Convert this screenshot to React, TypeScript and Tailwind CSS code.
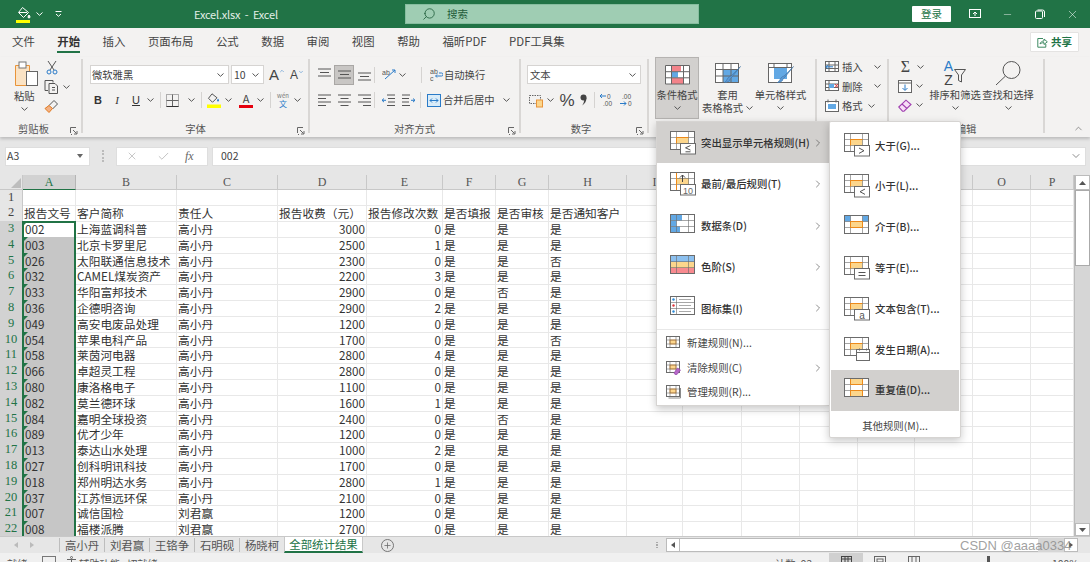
import React from "react";
import { X, Check, Minus, Search, ChevronDown, ChevronRight, ChevronUp, Plus } from "lucide-react";

const Chev = ({ c = "" }: { c?: string }) => (
  <svg width="7" height="4" viewBox="0 0 7 4" className={`shrink-0 ${c}`} fill="none" stroke="#555" strokeWidth="1"><path d="M.5.5 3.5 3.3 6.5.5" /></svg>
);

type Kind = "gt" | "lt" | "le" | "top" | "bar" | "scale" | "set" | "between" | "eq" | "text" | "date" | "dup";

const GridIcon = ({ k }: { k: Kind }) => {
  const g = "#6b6b6b";
  return (
    <svg width="27" height="24" viewBox="0 0 27 24" className="shrink-0">
      <rect x=".5" y=".5" width="24" height="18" fill="#fff" />
      {(k === "gt" || k === "lt" || k === "le" || k === "eq" || k === "text" || k === "date") && (
        <><rect x="6.5" y="6.5" width="12" height="6" fill="#fcd68c" /></>
      )}
      {k === "top" && <><rect x="6" y="6" width="13" height="6" fill="#fcd68c" /></>}
      {k === "bar" && <><rect x="1" y="1" width="11" height="5.5" fill="#62a8e4" /><rect x="1" y="6.5" width="5.5" height="6" fill="#62a8e4" /><rect x="1" y="12.5" width="9" height="6" fill="#62a8e4" /></>}
      {k === "scale" && <><rect x="1" y="1" width="24" height="6" fill="#8cc0ef" /><rect x="1" y="7" width="24" height="6" fill="#fcd68c" /><rect x="1" y="13" width="24" height="6" fill="#f88a8f" /></>}
      {k === "between" && <><rect x="1" y="1" width="5.5" height="5.5" fill="#62a8e4" /><rect x="18.5" y="1" width="6" height="5.5" fill="#62a8e4" /><rect x="6.5" y="6.5" width="12" height="6" fill="#fcd68c" /></>}
      {k === "dup" && <><rect x="6.5" y=".5" width="12" height="6" fill="#fcd68c" /><rect x="6.5" y="12.5" width="12" height="6" fill="#fcd68c" /></>}
      <path d={k === "set" ? "M.5 6.5h24M.5 12.5h24M6.5 .5v18" : "M.5 6.5h24M.5 12.5h24M6.5 .5v18M18.5 .5v18"} stroke={g} fill="none" opacity=".6" />
      {(k === "gt" || k === "lt" || k === "le" || k === "eq" || k === "text" || k === "date") && <path d="M6.5 12.5v-6h12" stroke="#ed8a1a" fill="none" />}
      {k === "top" && <path d="M6.5 18.5V.5M6.5 .5h12" stroke="#ed8a1a" fill="none" />}
      {k === "between" && <path d="M6.5 12.5v-6h12v6z" stroke="#ed8a1a" fill="none" />}
      {k === "dup" && <path d="M6.5 .5v6h12v-6M6.5 18.5v-6h12v6" stroke="#ed8a1a" fill="none" />}
      {k === "set" && <><circle cx="3.5" cy="3.5" r="1.2" fill="#2a8ad8" /><circle cx="3.5" cy="9.5" r="1.2" fill="#e0383c" /><circle cx="3.5" cy="15.5" r="1.2" fill="#2a8ad8" /><path d="M9 3.5h12M9 9.5h12M9 15.5h12" stroke="#aaa" /></>}
      <rect x=".5" y=".5" width="24" height="18" fill="none" stroke={g} />
      {k === "top" && <path d="M12.5 10V3M10 5.5l2.5-2.5 2.5 2.5" stroke="#444" fill="none" />}
      {(k === "gt" || k === "lt" || k === "le" || k === "eq" || k === "text" || k === "top") && <rect x="10.5" y="12.5" width="15" height="10.5" fill="#fff" stroke={g} />}
      {k === "gt" && <path d="M15 15l5 2.700-5 2.700" stroke="#555" fill="none" />}
      {k === "lt" && <path d="M21 15l-5 2.700 5 2.700" stroke="#555" fill="none" />}
      {k === "le" && <path d="M20.500 14.500l-5 2.300 5 2.300M15.500 20.800h5" stroke="#555" fill="none" />}
      {k === "eq" && <path d="M14.500 16.500h7M14.500 19.500h7" stroke="#555" fill="none" />}
      {k === "text" && <text x="18" y="21.5" textAnchor="middle" fontSize="10" fill="#555" fontFamily="Liberation Sans">a</text>}
      {k === "top" && <text x="18" y="21.6" textAnchor="middle" fontSize="9" fill="#666" fontFamily="Liberation Sans">10</text>}
      {k === "date" && <><rect x="12.5" y="12.5" width="13" height="11" fill="#fff" stroke={g} /><path d="M12.5 15.5h13" stroke={g} /><path d="M15.5 11.5v2M22.5 11.5v2" stroke={g} /></>}
    </svg>
  );
};

const SmallGrid = ({ k }: { k: "new" | "clear" | "manage" }) => (
  <svg width="15" height="14" viewBox="0 0 15 14" className="shrink-0">
    <rect x=".5" y=".5" width="13" height="11" fill="#fff" stroke="#6b6b6b" />
    <rect x="4" y="4" width="6" height="4" fill="#fcd68c" stroke="#ed8a1a" strokeWidth=".8" />
    <path d="M.5 4h13M.5 8h13M4 .5v11M10 .5v11" stroke="#6b6b6b" strokeWidth=".6" fill="none" />
    {k === "clear" && <path d="M8 12l3.500-5 3 2-3.500 4.500h-2z" fill="#b668c8" stroke="#8f3fa6" strokeWidth=".6" />}
    {k === "manage" && <path d="M2.500 13h12V3" fill="none" stroke="#8a8a8a" />}
  </svg>
);

const Align = ({ kind }: { kind: "l" | "c" | "r" }) => {
  const rows = kind === "l" ? ["M1 1h13", "M1 4.5h8", "M1 8h13", "M1 11.5h8"] : kind === "c" ? ["M1 1h13", "M3.5 4.5h8", "M1 8h13", "M3.5 11.5h8"] : ["M1 1h13", "M6 4.5h8", "M1 8h13", "M6 11.5h8"];
  return <svg width="15" height="13" viewBox="0 0 15 13" stroke="#555" fill="none"><path d={rows.join("")} /></svg>;
};

const VAlign = ({ y }: { y: number }) => (
  <svg width="15" height="13" viewBox="0 0 15 13" stroke="#555" fill="none"><path d={`M1 ${y}h13M3 ${y + 3.5}h9M1 ${y + 7}h13`} /></svg>
);

const Launcher = () => (
  <svg width="8" height="8" viewBox="0 0 8 8" fill="none" stroke="#666"><path d="M.5 6V.5H6" /><path d="M3 3l3.500 3.500M7 4v3H4" /><path d="M1 7.500h1" /></svg>
);

const Sep = ({ h = "h-[16px]" }: { h?: string }) => <div className={`w-px bg-[#d5d3d1] shrink-0 ${h}`} />;

const Group = ({ w, label, children, launcher = true, labelClass = "" }: { w: string; label: string; children: React.ReactNode; launcher?: boolean; labelClass?: string }) => (
  <div className={`${w} shrink-0 h-full flex flex-col`}>
    <div className="h-[64px] flex">{children}</div>
    <div className="flex-1 flex items-center relative">
      <div className={`w-full text-center text-[#555] text-[10.3px] leading-none ${labelClass}`}>{label}</div>
      {launcher && <div className="absolute right-[3px] top-[6px]"><Launcher /></div>}
    </div>
  </div>
);

const GSep = () => <div className="w-[2px] h-[74px] mt-[2px] bg-[#d9d7d5] shrink-0" />;

const StackBtn = ({ w, icon, lines, active = false }: { w: string; icon: React.ReactNode; lines: string[]; active?: boolean }) => (
  <div className={`${w} shrink-0 flex flex-col items-center text-[10.3px] leading-[13px] text-[#444] h-[62px] ${active ? "bg-[#d2d0ce] border border-[#b5b3b1]" : ""}`}>
    <div className={`${active ? "h-[29px]" : "h-[30px]"} flex items-end`}>{icon}</div>
    <div className="mt-[1px] whitespace-nowrap">{lines[0]}</div>
    {lines[1] ? (
      <div className="whitespace-nowrap flex items-center gap-[3px]">{lines[1]}<Chev /></div>
    ) : (
      <div className="h-[13px] flex items-center"><Chev /></div>
    )}
  </div>
);

const Tabs = ["文件", "开始", "插入", "页面布局", "公式", "数据", "审阅", "视图", "帮助", "福昕PDF", "PDF工具集"];

const FF = "font-['Noto_Sans_CJK_SC','Noto_Sans',sans-serif]";

const cols = ["A", "B", "C", "D", "E", "F", "G", "H", "I", "", "", "", "", "", "O", "P"];
const rows: [string, string, string, number, number, string, string, string][] = [
  ["002", "上海蓝调科普", "高小丹", 3000, 0, "是", "是", "是"],
  ["003", "北京卡罗里尼", "高小丹", 2500, 1, "是", "是", "是"],
  ["026", "太阳联通信息技术", "高小丹", 2300, 0, "是", "是", "否"],
  ["032", "CAMEL煤炭资产", "高小丹", 2200, 3, "是", "是", "是"],
  ["033", "华阳富邦技术", "高小丹", 2900, 0, "是", "否", "是"],
  ["036", "企德明咨询", "高小丹", 2900, 2, "是", "是", "是"],
  ["049", "高安电废品处理", "高小丹", 1200, 0, "是", "是", "是"],
  ["054", "苹果电科产品", "高小丹", 1700, 0, "是", "是", "否"],
  ["058", "莱茵河电器", "高小丹", 2800, 4, "是", "是", "是"],
  ["066", "卓超灵工程", "高小丹", 2800, 0, "是", "是", "是"],
  ["080", "康洛格电子", "高小丹", 1100, 0, "是", "是", "是"],
  ["082", "莫兰德环球", "高小丹", 1600, 1, "是", "是", "是"],
  ["084", "嘉明全球投资", "高小丹", 2400, 0, "是", "否", "是"],
  ["089", "优才少年", "高小丹", 1200, 0, "是", "是", "是"],
  ["013", "泰达山水处理", "高小丹", 1000, 2, "是", "是", "是"],
  ["027", "创科明讯科技", "高小丹", 1700, 0, "是", "是", "是"],
  ["018", "郑州明达水务", "高小丹", 2800, 1, "是", "是", "是"],
  ["037", "江苏恒远环保", "高小丹", 2100, 0, "是", "是", "是"],
  ["007", "诚信国检", "刘君赢", 1200, 0, "是", "是", "是"],
  ["008", "福楼派腾", "刘君赢", 2700, 0, "是", "是", "是"],
];

const GRID = "grid grid-cols-[23px_53px_101px_101px_89px_76px_53px_53px_78px_56px_59px_58px_58px_57px_58px_58px_43px]";
const CELL = "border-r border-b border-[#e8e8e8] px-[1px] whitespace-nowrap overflow-visible min-w-0";
const Empties = ({ n }: { n: number }) => <>{Array.from({ length: n }).map((_, i) => <div key={i} className={CELL} />)}</>;
const RowHead = ({ n, sel }: { n: number; sel?: boolean }) => (
  <div className={`font-['Liberation_Serif',serif] text-[12.5px] text-center border-r border-b ${sel ? "bg-[#d2d2d2] text-[#217346] border-[#b5b5b5] border-r-[#217346]" : "bg-[#e6e6e6] text-[#444] border-[#c8c8c8]"}`}>{n}</div>
);

const menu1: [Kind, string][] = [["le", "突出显示单元格规则(H)"], ["top", "最前/最后规则(T)"], ["bar", "数据条(D)"], ["scale", "色阶(S)"], ["set", "图标集(I)"]];
const menu2: [Kind, string][] = [["gt", "大于(G)..."], ["lt", "小于(L)..."], ["between", "介于(B)..."], ["eq", "等于(E)..."], ["text", "文本包含(T)..."], ["date", "发生日期(A)..."], ["dup", "重复值(D)..."]];

const Brush = () => (
  <path d="M25.500 3.500L17 14c-1.500 1-2 2-2.500 3.500-1.500 1.500-3 2-5 2 1.500-1 2.500-3 3.500-4.500 1-1.500 2-1.500 3.200-2z" fill="#5d9ad6" stroke="#3c6f9f" strokeWidth=".6" />
);

export default function App() {
  return (
    <div className={`relative w-[1090px] h-[562px] overflow-hidden flex flex-col bg-[#e6e6e6] ${FF}`}>
      {/* Title bar */}
      <div className="h-[28px] shrink-0 bg-[#217346] flex items-center text-white">
        <div className="pl-[16px] w-[194px] flex items-center">
          <svg width="15" height="17" viewBox="0 0 15 17" fill="none" stroke="#fff"><path d="M6.500 1.500l6 5-5 5-5-5zM3 6.500h8" /><path d="M13 9c.8 1 1 1.600 1 2a1 1 0 0 1-2 0c0-.4.3-1 1-2z" fill="#fff" /><rect x="0" y="14" width="14" height="3" fill="#ffff00" stroke="none" /></svg>
          <svg width="7" height="4" viewBox="0 0 7 4" className="ml-[5px]" fill="none" stroke="#fff"><path d="M.5.5 3.500 3.300 6.500.5" /></svg>
          <svg width="7" height="6" viewBox="0 0 7 6" className="ml-[12px]" fill="none" stroke="#fff"><path d="M.5.5h6M1 3l2.500 2.300L6 3" /></svg>
        </div>
        <div className="w-[211px] text-[11px] tracking-[-0.2px] text-[#e4efe9] whitespace-pre">Excel.xlsx  -  Excel</div>
        <div className="w-[294px] h-[20px] bg-[#9fcdb3] border border-[#86bd9f] flex items-center pl-[16px] text-[#1f5c3a] text-[10.5px]">
          <Search size={14} strokeWidth={1.4} className="-scale-x-100" />
          <span className="ml-[11px]">搜索</span>
        </div>
        <div className="ml-[213px] w-[39px] h-[16px] bg-white rounded-[1px] text-[#217346] text-[10.5px] text-center leading-[16px]">登录</div>
        <svg width="12" height="10" viewBox="0 0 12 10" className="ml-[18px]" fill="none" stroke="#fff"><rect x=".5" y=".5" width="11" height="8" /><path d="M6 7V3M4 5l2-2 2 2" /></svg>
        <Minus size={11} strokeWidth={1} className="ml-[21px]" />
        <svg width="10" height="10" viewBox="0 0 10 10" className="ml-[22px]" fill="none" stroke="#fff"><rect x=".5" y="2" width="7" height="7.500" rx="1" /><path d="M2.500 1h5a2 2 0 0 1 2 2v5" /></svg>
        <X size={13} strokeWidth={1} className="ml-[21px]" />
      </div>

      {/* Tabs */}
      <div className="h-[29px] shrink-0 bg-[#f3f2f1] flex items-center pl-[12px] gap-[22.5px] relative text-[11.4px] text-[#444]">
        {Tabs.map((t) => (
          <div key={t} className={`relative h-[29px] leading-[27px] whitespace-nowrap ${t === "开始" ? "font-bold text-[#333]" : ""}`}>
            {t}
            {t === "开始" && <div className="absolute left-0 right-0 top-[23px] h-[2px] bg-[#217346]" />}
          </div>
        ))}
        <div className="absolute left-[1030px] top-[4px] w-[49px] h-[20px] bg-white border border-[#e4e3e2] rounded-[1px] flex items-center justify-center gap-[3px] text-[#217346] font-bold text-[10.5px]">
          <svg width="11" height="11" viewBox="0 0 11 11" fill="none" stroke="#3f8a63"><path d="M6 1.500H.8v8.700h8V7" /><path d="M3 7c.5-2 2-3 4-3V2l3.300 2.800L7 7.500V5.700C5.500 5.700 4 6 3 7z" /></svg>
          共享
        </div>
      </div>

      {/* Ribbon */}
      <div className="h-[80px] shrink-0 bg-[#f3f2f1] flex text-[#444] shadow-[0_2px_3px_rgba(0,0,0,0.18)] z-[1]">
        <Group w="w-[81px]" label="剪贴板" labelClass="pr-[14px]">
          <div className="w-[44px] pl-[14px] flex flex-col items-start text-[10.3px] leading-[13px]">
            <svg width="25" height="26" viewBox="0 0 25 26" className="mt-[4px]" fill="none"><path d="M1.500 4.500h14v20h-14z" fill="#fbe3c4" stroke="#e8943a" /><rect x="5" y="1" width="7" height="6" fill="#fff" stroke="#777" /><rect x="12.500" y="10.500" width="11" height="14" fill="#fff" stroke="#666" /></svg>
            <div className="mt-[2px]">粘贴</div>
            <Chev c="ml-[7px] mt-[5px]" />
          </div>
          <div className="flex flex-col pt-[3px] gap-[5px]">
            <svg width="12" height="15" viewBox="0 0 12 15" className="ml-[2px]" fill="none" stroke="#555"><path d="M2 1l6 9M10 1L4 10" /><circle cx="3" cy="12" r="2" stroke="#2a7bc8" /><circle cx="9" cy="12" r="2" stroke="#2a7bc8" /></svg>
            <div className="flex items-center gap-[4px]">
              <svg width="15" height="14" viewBox="0 0 15 14" fill="none" stroke="#555"><path d="M9 2.500V.5H1v10h3" /><path d="M5 3.500h6l2.500 2.500v7.500H5zM8 7.500h3M8 10h3" /></svg>
              <Chev />
            </div>
            <svg width="15" height="14" viewBox="0 0 15 14" fill="none" stroke="#555"><path d="M5 6.500l5-5 3.500 3.500-5 5" /><path d="M5 6.500L1 9.500 5 13.500l3.500-4z" fill="#f4b183" stroke="#e07a20" /></svg>
          </div>
        </Group>
        <GSep />
        <Group w="w-[225px]" label="字体">
          <div className="pl-[7px] flex flex-col">
            <div className="flex items-center mt-[8px] gap-[2px]">
              <div className="w-[139px] h-[19px] bg-white border border-[#d6d4d2] flex items-center justify-between px-[1px] pr-[4px] text-[10.3px]">微软雅黑<Chev /></div>
              <div className="w-[33px] h-[19px] bg-white border border-[#d6d4d2] flex items-center justify-between pl-[2px] pr-[4px] text-[10.5px]">10<Chev /></div>
              <div className="ml-[3px] text-[#444] text-[15px] leading-[16px] w-[19px] flex items-start font-['Liberation_Sans',sans-serif]">A<ChevronUp size={6} color="#2a7bc8" strokeWidth={2} className="mt-[1px]" /></div>
              <div className="text-[#444] text-[12px] leading-[16px] w-[15px] flex items-start font-['Liberation_Sans',sans-serif]">A<ChevronDown size={6} color="#2a7bc8" strokeWidth={2} className="mt-[2px]" /></div>
            </div>
            <div className="flex items-center mt-[6px] h-[20px] text-[#333]">
              <div className="w-[10px] ml-[3px] text-[11px] font-bold font-['Liberation_Sans',sans-serif] text-center">B</div>
              <div className="w-[10px] ml-[9px] text-[11px] italic font-['Liberation_Serif',serif] text-center">I</div>
              <div className="w-[10px] ml-[9px] text-[11px] underline font-['Liberation_Sans',sans-serif] text-center">U</div>
              <Chev c="ml-[6px] mr-[6px]" />
              <Sep />
              <svg width="13" height="13" viewBox="0 0 13 13" className="ml-[5px]" fill="none" stroke="#666"><rect x=".5" y=".5" width="12" height="12" strokeDasharray="1 1" /><path d="M6.500 .5v12M.5 6.500h12" /><path d="M.5 12.500h12" stroke="#333" /></svg>
              <Chev c="ml-[9px] mr-[6px]" />
              <Sep />
              <svg width="14" height="15" viewBox="0 0 14 15" className="ml-[5px]" fill="none" stroke="#555"><path d="M5 .8l5 4-4.500 4.500-4-4z" /><path d="M11 5.500c.8 1 1 1.500 1 2a1 1 0 0 1-2 0c0-.4.3-1 1-2z" fill="#2a7bc8" stroke="none" /><rect y="11.500" width="14" height="3.500" fill="#ffff00" stroke="none" /></svg>
              <Chev c="ml-[4px] mr-[7px]" />
              <div className="w-[14px] flex flex-col items-center text-[11px] leading-[11px] text-[#444]">A<div className="w-[14px] h-[3px] bg-[#e6000e] mt-[1px]" /></div>
              <Chev c="ml-[4px] mr-[6px]" />
              <Sep />
              <div className="w-[14px] ml-[5px] flex flex-col items-center text-[6px] leading-[6px] text-[#777]">wén<span className="text-[8px] leading-[9px] text-[#2a7bc8]">文</span></div>
              <Chev c="ml-[4px]" />
            </div>
          </div>
        </Group>
        <GSep />
        <Group w="w-[209px]" label="对齐方式">
          <div className="pl-[4px] flex flex-col">
            <div className="flex items-center mt-[7px] h-[21px]">
              <div className="w-[20px] flex justify-center"><VAlign y={1} /></div>
              <div className="w-[20px] h-[20px] bg-[#c8c6c4] border border-[#a9a7a5] flex items-center justify-center"><VAlign y={3} /></div>
              <div className="w-[20px] flex justify-center"><VAlign y={5} /></div>
              <Sep />
              <svg width="15" height="15" viewBox="0 0 15 15" className="ml-[7px]" fill="none" stroke="#2a7bc8"><path d="M3 12L13 3M10 3h3v3" /><text x="0" y="8" fontSize="7" fill="#555" stroke="none" fontFamily="Liberation Sans">ab</text></svg>
              <Chev c="ml-[2px] mr-[15px]" />
              <Sep />
              <div className="ml-[8px] flex items-center gap-[1px] text-[10.3px] whitespace-nowrap">
                <svg width="13" height="13" viewBox="0 0 13 13" fill="none" stroke="#2a7bc8"><text x="0" y="6" fontSize="7" fill="#555" stroke="none" fontFamily="Liberation Sans">ab</text><text x="0" y="13" fontSize="7" fill="#555" stroke="none" fontFamily="Liberation Sans">c</text><path d="M9 8h2.500a1.500 1.500 0 0 0 0-3H9M9 8l-3 0M7 6.500L5.500 8 7 9.500" /></svg>
                自动换行
              </div>
            </div>
            <div className="flex items-center mt-[5px] h-[20px]">
              <div className="w-[20px] flex justify-center"><Align kind="l" /></div>
              <div className="w-[20px] flex justify-center"><Align kind="c" /></div>
              <div className="w-[20px] flex justify-center"><Align kind="r" /></div>
              <Sep />
              <svg width="13" height="13" viewBox="0 0 13 13" className="ml-[7px]" fill="none" stroke="#555"><path d="M5 1h8M6 4.500h7M6 8h7M5 11.500h8" /><path d="M4 6.300H0M2 4.500L0 6.300l2 1.800" stroke="#2a7bc8" /></svg>
              <svg width="13" height="13" viewBox="0 0 13 13" className="ml-[7px] mr-[5px]" fill="none" stroke="#555"><path d="M0 1h8M0 4.500h7M0 8h7M0 11.500h8" /><path d="M9 6.300h4M11 4.500l2 1.800-2 1.800" stroke="#2a7bc8" /></svg>
              <Sep />
              <div className="ml-[6px] flex items-center gap-[2px] text-[10.3px] whitespace-nowrap">
                <svg width="14" height="13" viewBox="0 0 14 13" fill="#d9ecf9" stroke="#2a7bc8"><rect x=".5" y=".5" width="13" height="12" /><path d="M3 6.500h8M5 4.500L3 6.500l2 2M9 4.500l2 2-2 2" fill="none" /></svg>
                合并后居中
                <Chev c="ml-[7px]" />
              </div>
            </div>
          </div>
        </Group>
        <GSep />
        <Group w="w-[126px]" label="数字" labelClass="pr-[6px]">
          <div className="pl-[6px] flex flex-col">
            <div className="mt-[8px] w-[114px] h-[19px] bg-white border border-[#d6d4d2] flex items-center justify-between pl-[2px] pr-[4px] text-[10.3px]">文本<Chev /></div>
            <div className="flex items-center mt-[6px] h-[20px] text-[#444]">
              <svg width="15" height="15" viewBox="0 0 15 15" className="ml-[2px]" fill="none" stroke="#666"><rect x=".5" y="2.500" width="11" height="8" strokeDasharray="1.500 1" /><rect x="7.500" y="7" width="6" height="7" fill="#fcd68c" stroke="#e8943a" /></svg>
              <Chev c="ml-[3px] mr-[5px]" />
              <span className="text-[17px] leading-none font-['Liberation_Sans',sans-serif] w-[16px] text-center">%</span>
              <svg width="7" height="12" viewBox="0 0 7 12" className="ml-[5px]" fill="#444"><circle cx="3.500" cy="3.500" r="3" /><path d="M6.500 3.500c0 3.500-1.500 6.500-4.500 8 1.500-1.500 2-3.500 2-5z" /></svg>
              <div className="ml-[7px]"><Sep /></div>
              <svg width="16" height="14" viewBox="0 0 16 14" className="ml-[4px]" fill="none" stroke="#2a7bc8"><path d="M7 3H1M3 1L1 3l2 2" /><text x="8" y="6" fontSize="6.500" fill="#555" stroke="none" fontFamily="Liberation Sans">0</text><text x="4" y="13" fontSize="6.500" fill="#555" stroke="none" fontFamily="Liberation Sans">.00</text></svg>
              <svg width="16" height="14" viewBox="0 0 16 14" className="ml-[4px]" fill="none" stroke="#2a7bc8"><text x="3" y="6" fontSize="6.500" fill="#555" stroke="none" fontFamily="Liberation Sans">.00</text><path d="M1 10.500h6M5 8.500l2 2-2 2" /><text x="9" y="13" fontSize="6.500" fill="#555" stroke="none" fontFamily="Liberation Sans">0</text></svg>
            </div>
          </div>
        </Group>
        <GSep />
        <Group w="w-[166px]" label="样式" launcher={false}>
          <div className="pl-[6px] flex">
            <StackBtn w="w-[44px]" active lines={["条件格式"]} icon={
              <svg width="25" height="20" viewBox="0 0 25 20" className="mb-[2px]" fill="none"><rect x=".5" y=".5" width="24" height="18.500" fill="#fff" /><rect x="6" y="1" width="10" height="5.500" fill="#f3838a" /><rect x="6" y="7" width="7" height="5.500" fill="#62a8e4" /><rect x="6" y="13" width="13" height="6" fill="#f3838a" /><path d="M.5 .5h24v18.500H.5zM.5 6.700h24M.5 12.800h24M6.500 .5v18.500M18.500 .5v18.500" stroke="#666" /></svg>
            } />
            <div className="w-[4px]" />
            <StackBtn w="w-[49px]" lines={["套用", "表格格式"]} icon={
              <svg width="26" height="21" viewBox="0 0 26 21" className="mb-[3px]" fill="none"><rect x=".5" y=".5" width="23" height="19" fill="#fff" stroke="#666" /><rect x="8" y="6" width="15" height="13" fill="#62a8e4" /><path d="M.5 6.500h23M.5 13h23M8 .5v19M16 .5v19" stroke="#666" /><Brush /></svg>
            } />
            <div className="w-[3px]" />
            <StackBtn w="w-[51px]" lines={["单元格样式"]} icon={
              <svg width="26" height="21" viewBox="0 0 26 21" className="mb-[3px]" fill="none"><rect x=".5" y=".5" width="23" height="19" fill="#fff" stroke="#666" /><rect x="6" y="5" width="13" height="11" fill="#62a8e4" /><path d="M.5 4.500h23M6 .5v4M19 .5v4" stroke="#666" /><Brush /></svg>
            } />
          </div>
        </Group>
        <GSep />
        <Group w="w-[70px]" label="单元格" launcher={false}>
          <div className="pl-[8px] flex flex-col text-[10.3px] leading-[19.5px] w-full">
            <div className="flex items-center gap-[3px]">
              <svg width="14" height="12" viewBox="0 0 14 12" fill="#fff" stroke="#666"><rect x=".5" y=".5" width="13" height="10" /><path d="M.5 4h13M.5 7.500h13M4 .5v10M10 .5v10" /><path d="M8 5.800H1M3 3.800l-2 2 2 2" stroke="#2a7bc8" fill="none" /></svg>
              插入<Chev c="ml-[8px]" />
            </div>
            <div className="flex items-center gap-[3px]">
              <svg width="14" height="12" viewBox="0 0 14 12" fill="#fff" stroke="#666"><rect x=".5" y=".5" width="13" height="10" /><path d="M.5 4h13M.5 7.500h13M4 .5v10" /><rect x="4" y="4" width="5" height="4" fill="#62a8e4" stroke="none" /><path d="M10 4l3 3.500M13 4l-3 3.500" stroke="#e0383c" /></svg>
              删除<Chev c="ml-[8px]" />
            </div>
            <div className="flex items-center gap-[3px]">
              <svg width="14" height="13" viewBox="0 0 14 13" fill="#fff" stroke="#666"><rect x=".5" y="2.500" width="13" height="10" /><rect x="3" y="5" width="8" height="5" fill="#62a8e4" stroke="none" /><path d="M3 .5v3M11 .5v3" /></svg>
              格式<Chev c="ml-[2px]" />
            </div>
          </div>
        </Group>
        <GSep />
        <Group w="w-[154px]" label="编辑" launcher={false}>
          <div className="flex pl-[9px]">
            <div className="w-[33px] flex flex-col pt-[3px] gap-[5px] text-[#444]">
              <div className="flex items-center gap-[4px] h-[14px]"><span className="w-[15px] text-center text-[16px] leading-none font-['Liberation_Serif',serif]">Σ</span><Chev /></div>
              <div className="flex items-center gap-[3px] h-[14px]">
                <svg width="14" height="13" viewBox="0 0 14 13" fill="#fff" stroke="#666"><rect x=".5" y=".5" width="13" height="12" /><path d="M.5 3h13" /><path d="M7 4.500v5.500M4.500 8L7 10.500 9.500 8" stroke="#2a7bc8" fill="none" /></svg>
                <Chev c="ml-[1px]" />
              </div>
              <div className="flex items-center gap-[3px] h-[14px]">
                <svg width="14" height="13" viewBox="0 0 14 13" fill="#f7ddf6" stroke="#a03fb0" strokeWidth="1.100"><path d="M.8 8L8 1.200 13 5.500 6 12.200H4.500z" /><path d="M4 5l5 4.500" /></svg>
                <Chev c="ml-[1px]" />
              </div>
            </div>
            <div className="w-[52px] -ml-[4px]">
              <StackBtn w="w-[56px]" lines={["排序和筛选"]} icon={
                <div className="flex items-end text-[14px] leading-[14px]">
                  <div className="flex flex-col items-center font-['Liberation_Sans',sans-serif]"><span className="text-[#2a7bc8]">A</span><span>Z</span></div>
                  <svg width="12" height="14" viewBox="0 0 12 14" className="mb-[4px] ml-[1px]" fill="none" stroke="#555"><path d="M.5.5h11L7.500 6v7l-3-1.500V6z" /></svg>
                </div>
              } />
            </div>
            <div className="w-[56px] ml-[3px]">
              <StackBtn w="w-[52px]" lines={["查找和选择"]} icon={
                <svg width="27" height="26" viewBox="0 0 27 26" className="mb-[1px]" fill="none" stroke="#555"><circle cx="16.500" cy="10" r="8.500" /><path d="M10.500 16L1 25" /></svg>
              } />
            </div>
          </div>
        </Group>
        <div className="w-[2px] h-[74px] mt-[2px] bg-[#d9d7d5] shrink-0" />
        <div className="flex-1 flex items-end justify-end pr-[6px] pb-[3px]"><ChevronUp size={11} color="#555" strokeWidth={1.3} /></div>
      </div>

      {/* Formula bar */}
      <div className="h-[38px] shrink-0 flex items-center bg-[#e6e6e6] pl-[5px] text-[#444]">
        <div className="w-[85px] h-[19px] bg-white border border-[#dedede] flex items-center justify-between pl-[1px] pr-[6px] text-[10.5px]">A3
          <svg width="6" height="4" viewBox="0 0 6 4" fill="#666"><path d="M0 0h6L3 4z" /></svg>
        </div>
        <div className="w-[26px] flex flex-col items-center gap-[1.5px]">
          <span className="w-[2px] h-[2px] bg-[#bbb]" /><span className="w-[2px] h-[2px] bg-[#bbb]" /><span className="w-[2px] h-[2px] bg-[#bbb]" /><span className="w-[2px] h-[2px] bg-[#bbb]" />
        </div>
        <div className="w-[92px] h-[19px] bg-white border border-[#dedede] flex items-center text-[#aaa]">
          <X size={12} strokeWidth={1.3} className="ml-[9px]" />
          <Check size={13} strokeWidth={1.3} className="ml-[19px]" />
          <span className="ml-[15px] font-['Liberation_Serif',serif] italic text-[#666] text-[12px] leading-none">fx</span>
        </div>
        <div className="ml-[4px] w-[874px] h-[19px] bg-white border border-[#dedede] flex items-center justify-between pl-[8px] pr-[3px] text-[10.5px]">002
          <ChevronDown size={12} color="#666" strokeWidth={1.5} />
        </div>
      </div>

      {/* Sheet */}
      <div className="relative flex-1 min-h-0 bg-white flex overflow-hidden">
        <div className="w-[1074px] shrink-0 text-[11.7px] text-[#333] leading-[15.8px]">
          <div className={`${GRID} h-[14.5px] leading-[14px] font-['Liberation_Serif',serif] text-[12px] text-[#555]`}>
            <div className="bg-[#e6e6e6] border-r border-b border-[#c8c8c8] flex items-end justify-end p-[1px]">
              <svg width="10" height="10" viewBox="0 0 10 10" fill="#bdbdbd"><path d="M10 0v10H0z" /></svg>
            </div>
            {cols.map((c, i) => (
              <div key={i} className={`text-center border-r border-b ${c === "A" ? "bg-[#d2d2d2] text-[#217346] border-b-[#217346] border-r-[#b5b5b5]" : "bg-[#e6e6e6] border-[#c8c8c8]"}`}>{c}</div>
            ))}
            <div className="bg-[#e6e6e6] border-b border-[#c8c8c8]" />
          </div>
          <div className={`${GRID} h-[15.8px]`}><RowHead n={1} /><Empties n={17} /></div>
          <div className={`${GRID} h-[15.8px]`}>
            <RowHead n={2} />
            {["报告文号", "客户简称", "责任人", "报告收费（元）", "报告修改次数", "是否填报", "是否审核", "是否通知客户"].map((t) => <div key={t} className={CELL}>{t}</div>)}
            <Empties n={9} />
          </div>
          {rows.map((r, i) => (
            <div key={r[0]} className={`${GRID} h-[15.8px]`}>
              <RowHead n={i + 3} sel />
              <div className={`relative px-[2px] border-r-2 border-[#217346] ${i === 0 ? "bg-white shadow-[inset_1px_2px_0_#217346,inset_0_-1px_0_#217346]" : "bg-[#c6c6c6] shadow-[inset_1px_0_0_#217346]"}`}>
                <div className="absolute left-0 top-0 w-0 h-0 border-t-[5px] border-r-[5px] border-t-[#217346] border-r-transparent" />
                {r[0]}
              </div>
              <div className={CELL}>{r[1]}</div>
              <div className={CELL}>{r[2]}</div>
              <div className={`${CELL} text-right`}>{r[3]}</div>
              <div className={`${CELL} text-right`}>{r[4]}</div>
              <div className={CELL}>{r[5]}</div>
              <div className={CELL}>{r[6]}</div>
              <div className={CELL}>{r[7]}</div>
              <Empties n={9} />
            </div>
          ))}
        </div>
        {/* Vertical scrollbar */}
        <div className="w-[16px] shrink-0 h-full bg-[#d6d6d6] flex flex-col border-l border-[#bbb]">
          <div className="h-[15px] bg-white border border-[#bbb] flex items-center justify-center"><svg width="7" height="4" viewBox="0 0 7 4" fill="#555"><path d="M3.500 0L7 4H0z" /></svg></div>
          <div className="h-[76px] bg-white border border-[#aaa]" />
          <div className="flex-1" />
          <div className="h-[13px] bg-white border border-[#bbb] flex items-center justify-center"><svg width="7" height="4" viewBox="0 0 7 4" fill="#555"><path d="M0 0h7L3.500 4z" /></svg></div>
        </div>
      </div>

      {/* Sheet tabs */}
      <div className="h-[17px] shrink-0 bg-[#e6e6e6] flex items-center text-[11.4px] text-[#555] border-t border-[#c8c8c8]">
        <div className="w-[59px] flex items-center pl-[14px] gap-[12px]">
          <svg width="4" height="6" viewBox="0 0 4 6" fill="#bbb"><path d="M4 0v6L0 3z" /></svg>
          <svg width="4" height="6" viewBox="0 0 4 6" fill="#bbb"><path d="M0 0v6l4-3z" /></svg>
        </div>
        {["高小丹", "刘君赢", "王铬争", "石明砚", "杨晓柯"].map((t) => (
          <div key={t} className="w-[45px] h-[14px] leading-[14px] border-l border-[#bdbdbd] text-center whitespace-nowrap">{t}</div>
        ))}
        <div className="w-[79px] h-[16px] -mt-[1px] leading-[15px] bg-white text-[#217346] text-center border-b-2 border-[#217346] border-x border-x-[#c8c8c8] whitespace-nowrap">全部统计结果</div>
        <div className="ml-[18px] w-[13px] h-[13px] rounded-full border border-[#777] flex items-center justify-center"><Plus size={9} color="#666" strokeWidth={2} /></div>
        <div className="ml-[262px] flex flex-col gap-[1px]">
          <span className="w-[1.5px] h-[1.5px] bg-[#aaa]" /><span className="w-[1.5px] h-[1.5px] bg-[#aaa]" /><span className="w-[1.5px] h-[1.5px] bg-[#aaa]" />
        </div>
        <div className="ml-[8px] w-[14px] h-[14px] bg-white border border-[#bbb] flex items-center justify-center"><svg width="4" height="6" viewBox="0 0 4 6" fill="#555"><path d="M4 0v6L0 3z" /></svg></div>
        <div className="w-[358px] h-[14px] bg-white border-y border-[#bbb]" />
        <div className="w-[26px] h-[14px] bg-[#d6d6d6]" />
        <div className="w-[14px] h-[14px] bg-white border border-[#bbb] flex items-center justify-center"><svg width="4" height="6" viewBox="0 0 4 6" fill="#555"><path d="M0 0v6l4-3z" /></svg></div>
      </div>

      {/* Status bar */}
      <div className="h-[9px] shrink-0 bg-[#f0f0f0] overflow-hidden flex text-[10.3px] leading-[13px] text-[#555] pl-[7px] pt-[4px]">
        <span className="w-[35px]">就绪</span>
        <svg width="14" height="11" viewBox="0 0 14 11" fill="none" stroke="#777" className="-mt-[1px] shrink-0"><rect x=".5" y=".5" width="13" height="10" /></svg>
        <svg width="11" height="11" viewBox="0 0 11 11" fill="none" stroke="#666" className="ml-[10px] -mt-[1px] shrink-0"><circle cx="5.500" cy="1.500" r="1" /><path d="M1 3.500h9M5.500 3.500v4M5.500 7.500L3 11M5.500 7.500L8 11" /></svg>
        <span className="ml-[2px] w-[48px] whitespace-nowrap">辅助功能:</span>
        <span className="w-[50px] whitespace-nowrap">切就绪</span>
        <span className="ml-[598px] w-[54px] whitespace-nowrap">计数: 92</span>
        <div className="w-[34px] h-[9px] -mt-[4px] bg-[#d0d0d0] flex justify-center pt-[3px] shrink-0"><svg width="11" height="8" viewBox="0 0 11 8" fill="none" stroke="#444"><rect x=".5" y=".5" width="10" height="7" /><path d="M.5 3h10M4 .5v7M7 .5v7" /></svg></div>
        <svg width="12" height="8" viewBox="0 0 12 8" fill="none" stroke="#666" className="ml-[11px] -mt-[1px] shrink-0"><rect x=".5" y=".5" width="11" height="7" /><rect x="3" y="3" width="6" height="3" /></svg>
        <svg width="12" height="8" viewBox="0 0 12 8" fill="none" stroke="#666" className="ml-[22px] -mt-[1px] shrink-0"><rect x=".5" y=".5" width="11" height="7" /><path d="M4 .5v7M8 .5v7" /></svg>
        <div className="ml-[67px] w-[3px] h-[6px] -mt-[1px] bg-[#555] shrink-0" />
        <span className="ml-[62px] whitespace-nowrap">100%</span>
      </div>

      {/* Conditional formatting menu */}
      <div className="absolute left-[656px] top-[121px] w-[174px] h-[285px] bg-white border border-[#d6d4d2] shadow-[0_3px_8px_rgba(0,0,0,0.22)] text-[10.4px] font-medium text-[#333] z-10">
        <div className="h-[207px] flex flex-col">
          {menu1.map(([k, t], i) => (
            <div key={t} className={`flex-1 flex items-center pl-[13px] ${i === 0 ? "bg-[#d2d0ce]" : ""}`}>
              <GridIcon k={k} />
              <span className="ml-[4px] whitespace-nowrap">{t}</span>
              <ChevronRight size={12} strokeWidth={1.2} color="#444" className="ml-auto mr-[5px] shrink-0" />
            </div>
          ))}
        </div>
        <div className="h-px bg-[#e8e8e8]" />
        <div className="pt-[1px] font-normal text-[#444]">
          {[["new", "新建规则(N)..."], ["clear", "清除规则(C)"], ["manage", "管理规则(R)..."]].map(([k, t]) => (
            <div key={t} className="h-[24.5px] flex items-center pl-[9px]">
              <SmallGrid k={k as "new" | "clear" | "manage"} />
              <span className="ml-[6px] whitespace-nowrap">{t}</span>
              {k === "clear" && <ChevronRight size={12} strokeWidth={1.2} color="#444" className="ml-auto mr-[5px]" />}
            </div>
          ))}
        </div>
      </div>
      <div className="absolute left-[829px] top-[121px] w-[132px] h-[317px] bg-white border border-[#d6d4d2] rounded-[2px] shadow-[0_3px_8px_rgba(0,0,0,0.22)] text-[10.4px] font-medium text-[#333] z-10 px-[1px]">
        <div className="h-[288px] flex flex-col pt-[3px]">
          {menu2.map(([k, t], i) => (
            <div key={t} className={`h-[40.8px] shrink-0 flex items-center pl-[13px] ${i === 6 ? "bg-[#d2d0ce]" : ""}`}>
              <GridIcon k={k} />
              <span className="ml-[4px] whitespace-nowrap">{t}</span>
            </div>
          ))}
        </div>
        <div className="text-center font-normal text-[#444] pt-[8px]">其他规则(M)...</div>
      </div>

      <div className="absolute left-[960px] top-[538px] z-20 text-[13px] leading-[16px] text-[#888]/80 font-['Liberation_Sans',sans-serif] whitespace-nowrap">CSDN @aaaa0334</div>
    </div>
  );
}
